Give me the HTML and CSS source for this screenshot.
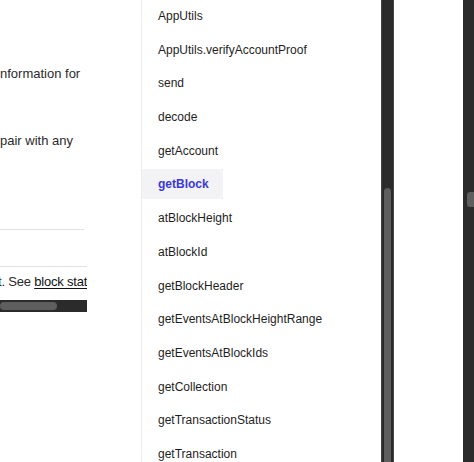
FILE: index.html
```html
<!DOCTYPE html>
<html>
<head>
<meta charset="utf-8">
<link rel="stylesheet" href="styles.css">
</head>
<body>
<div class="page">
  <div class="content">
    <p class="para first">nformation for</p>
    <p class="para second">pair with any</p>
    <div class="table">
      <div class="rule short"></div>
      <div class="row-space"></div>
      <div class="rule"></div>
      <p class="cell">t. See <a class="link">block state</a></p>
    </div>
    <div class="hscroll"><div class="hthumb"></div></div>
  </div>
  <div class="gap"></div>
  <nav class="sidebar">
    <a class="item">AppUtils</a>
    <a class="item">AppUtils.verifyAccountProof</a>
    <a class="item">send</a>
    <a class="item">decode</a>
    <a class="item">getAccount</a>
    <a class="item active">getBlock</a>
    <a class="item">atBlockHeight</a>
    <a class="item">atBlockId</a>
    <a class="item">getBlockHeader</a>
    <a class="item">getEventsAtBlockHeightRange</a>
    <a class="item">getEventsAtBlockIds</a>
    <a class="item">getCollection</a>
    <a class="item">getTransactionStatus</a>
    <a class="item">getTransaction</a>
  </nav>
  <div class="vscroll"><div class="vthumb"></div></div>
  <div class="blank"></div>
  <div class="edge"><div class="edge-thumb"></div></div>
</div>
</body>
</html>
```

FILE: styles.css
```css
html, body {
  margin: 0;
  padding: 0;
  background: #ffffff;
  overflow: hidden;
}
.page {
  display: flex;
  width: 474px;
  height: 462px;
  font-family: "Liberation Sans", Arial, sans-serif;
  color: #222;
}
.content {
  width: 87px;
  flex: none;
  overflow: hidden;
  display: flex;
  flex-direction: column;
}
.para {
  margin: 0;
  font-size: 13px;
  line-height: 20px;
  white-space: nowrap;
  color: #2a2a2a;
}
.para.first { margin-top: 64px; }
.para.second { margin-top: 47px; }
.table {
  margin-top: 78px;
  display: flex;
  flex-direction: column;
}
.rule {
  height: 1px;
  background: #e3e3e3;
  width: 87px;
}
.rule.short { width: 84px; }
.row-space { height: 36px; }
.cell {
  margin: 5px 0 0 -2px;
  font-size: 13px;
  line-height: 20px;
  letter-spacing: -0.2px;
  white-space: nowrap;
  color: #2a2a2a;
}
.link {
  color: #111;
  text-decoration: underline;
  text-underline-offset: 2px;
}
.hscroll {
  margin-top: 8px;
  height: 12px;
  background: #2b2b2b;
  display: flex;
  align-items: center;
}
.hthumb {
  width: 57px;
  height: 8px;
  border-radius: 4px;
  background: #5e5e5e;
}
.gap {
  width: 54px;
  flex: none;
}
.sidebar {
  width: 239px;
  flex: none;
  border-left: 1px solid #ededed;
  display: flex;
  flex-direction: column;
  align-items: flex-start;
  gap: 3.7px;
  padding-top: 1px;
  overflow: hidden;
}
.item {
  display: block;
  flex: none;
  height: 30px;
  line-height: 30px;
  padding: 0 16px;
  font-size: 12px;
  color: #1e1e1e;
  white-space: nowrap;
}
.item.active {
  background: #f3f3f6;
  color: #3a37dc;
  font-weight: 700;
  padding-right: 14px;
}
.vscroll {
  width: 13px;
  flex: none;
  background: #2b2b2b;
  box-shadow: inset 1px 0 0 #444, inset -1px 0 0 #444;
  display: flex;
  flex-direction: column;
  align-items: center;
  padding-top: 188px;
  box-sizing: border-box;
}
.vthumb {
  width: 7px;
  flex: 1;
  border-radius: 4px 4px 0 0;
  background: #5e5e5e;
}
.blank {
  width: 69px;
  flex: none;
}
.edge {
  width: 11px;
  flex: none;
  background: #2b2b2b;
  display: flex;
  flex-direction: column;
  align-items: flex-end;
  padding-top: 192px;
  box-sizing: border-box;
}
.edge-thumb {
  width: 7px;
  height: 15px;
  border-radius: 3px 0 0 3px;
  background: #5e5e5e;
}
```
